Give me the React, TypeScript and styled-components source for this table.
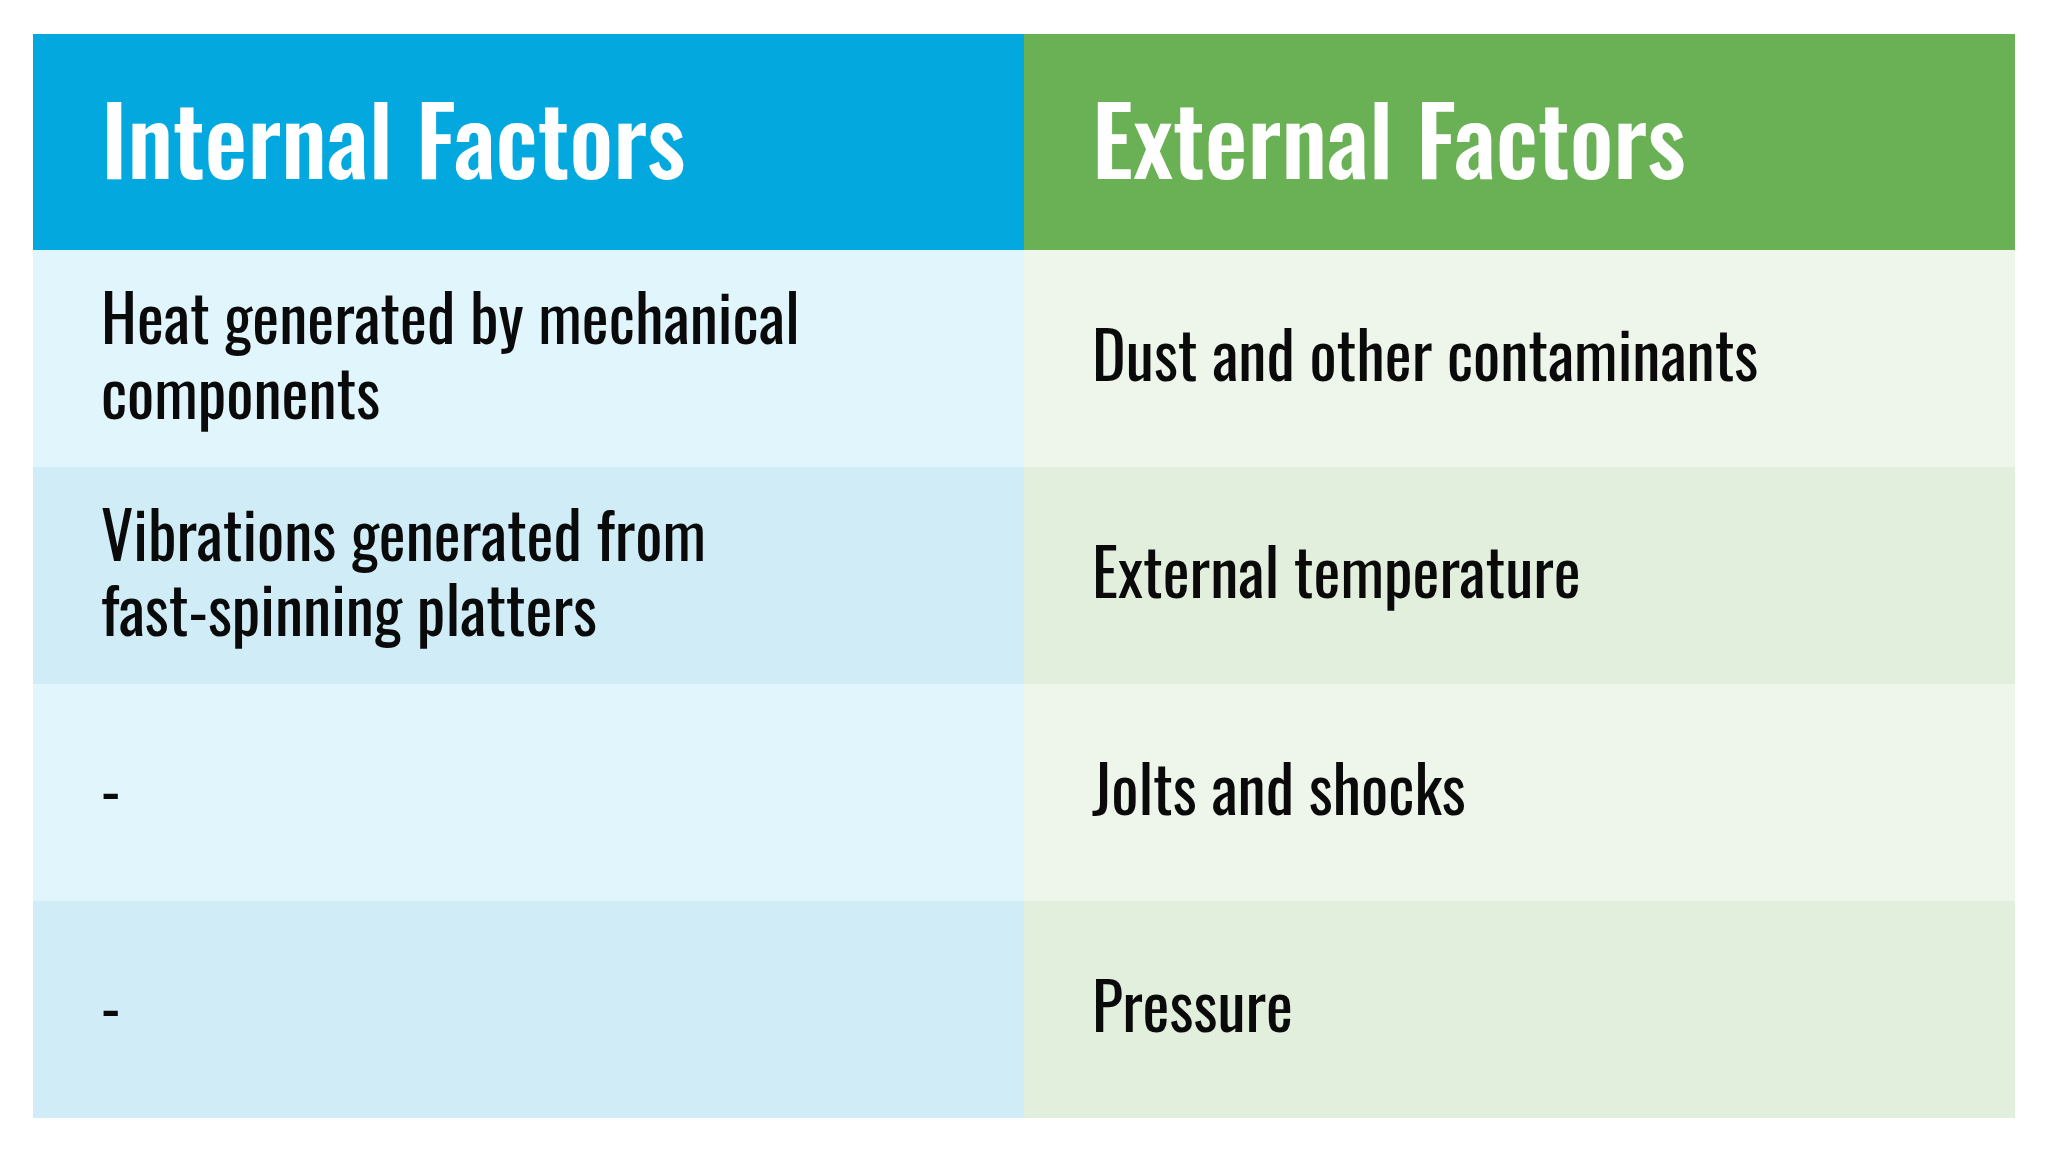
import React from "react";
import styled, { createGlobalStyle } from "styled-components";

const GlobalStyle = createGlobalStyle`
  html, body {
    margin: 0;
    padding: 0;
    background: #ffffff;
  }
  body {
    font-family: "Oswald", "Open Sans", "DejaVu Sans Condensed", sans-serif;
  }
`;

const Page = styled.div`
  width: 2048px;
  height: 1152px;
  box-sizing: border-box;
  padding: 34px 33px;
  background: #ffffff;
`;

const Table = styled.div`
  display: grid;
  grid-template-columns: 1fr 1fr;
  grid-template-rows: 216px repeat(4, 217px);
  width: 100%;
`;

const HeaderCell = styled.div<{ $tone: "blue" | "green" }>`
  display: flex;
  align-items: center;
  padding: 0 40px 12px 68px;
  background: ${(p) => (p.$tone === "blue" ? "#03a9de" : "#6ab156")};
  color: #ffffff;
  font-family: "Oswald", "Open Sans", "DejaVu Sans Condensed", sans-serif;
  font-weight: 500;
  font-size: 96px;
  line-height: 1;
`;

const Cell = styled.div<{ $tone: "blue" | "green"; $alt: boolean }>`
  display: flex;
  align-items: center;
  padding: 0 40px 12px 68px;
  background: ${(p) =>
    p.$tone === "blue"
      ? p.$alt
        ? "#cfecf7"
        : "#e1f5fc"
      : p.$alt
      ? "#e2efdd"
      : "#eef6ec"};
  color: #0a0a0a;
  font-family: "Oswald", "Open Sans", "DejaVu Sans Condensed", sans-serif;
  font-weight: 400;
  font-size: 64px;
  line-height: 75px;
`;

const CellText = styled.span`
  display: block;
  max-width: 705px;
`;

const rows: [string, string][] = [
  ["Heat generated by mechanical components", "Dust and other contaminants"],
  ["Vibrations generated from fast-spinning platters", "External temperature"],
  ["-", "Jolts and shocks"],
  ["-", "Pressure"],
];

export default function App() {
  return (
    <>
      <GlobalStyle />
      <Page>
        <Table>
          <HeaderCell $tone="blue">Internal Factors</HeaderCell>
          <HeaderCell $tone="green">External Factors</HeaderCell>
          {rows.map(([left, right], i) => (
            <React.Fragment key={i}>
              <Cell $tone="blue" $alt={i % 2 === 1}>
                <CellText>{left}</CellText>
              </Cell>
              <Cell $tone="green" $alt={i % 2 === 1}>
                <CellText>{right}</CellText>
              </Cell>
            </React.Fragment>
          ))}
        </Table>
      </Page>
    </>
  );
}
